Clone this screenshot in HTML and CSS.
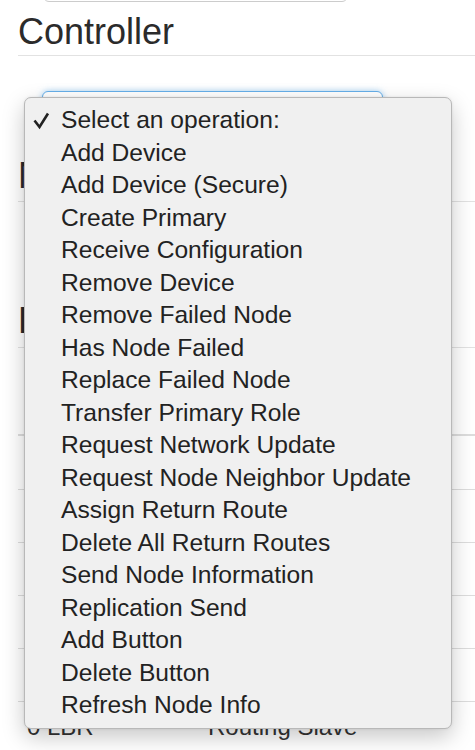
FILE: index.html
```html
<!DOCTYPE html>
<html>
<head>
<meta charset="utf-8">
<link rel="stylesheet" href="styles.css">
</head>
<body>
<div class="page">
  <div class="top-field"></div>
  <h3 class="heading heading-first">Controller</h3>
  <div class="select-box"></div>
  <h3 class="heading heading-second">Network</h3>
  <h3 class="heading heading-third">Devices</h3>
  <table class="nodes">
    <thead>
      <tr><th class="col-id">ID</th><th>Type</th></tr>
    </thead>
    <tbody>
      <tr><td>1 Controller</td><td>Static Controller</td></tr>
      <tr><td>2 Switch</td><td>Routing Slave</td></tr>
      <tr><td>3 Dimmer</td><td>Routing Slave</td></tr>
      <tr><td>4 Sensor</td><td>Routing Slave</td></tr>
      <tr><td>5 Sensor</td><td>Routing Slave</td></tr>
      <tr><td>0 LBR</td><td>Routing Slave</td></tr>
    </tbody>
  </table>

  <ul class="menu">
    <li class="item"><span class="gutter"><svg width="36" height="32" viewBox="0 0 36 32"><polyline points="9.5,16.5 14.5,23 23,9.5" fill="none" stroke="#222" stroke-width="2.6" stroke-linejoin="miter"/></svg></span><span>Select an operation:</span></li>
    <li class="item"><span class="gutter"></span><span>Add Device</span></li>
    <li class="item"><span class="gutter"></span><span>Add Device (Secure)</span></li>
    <li class="item"><span class="gutter"></span><span>Create Primary</span></li>
    <li class="item"><span class="gutter"></span><span>Receive Configuration</span></li>
    <li class="item"><span class="gutter"></span><span>Remove Device</span></li>
    <li class="item"><span class="gutter"></span><span>Remove Failed Node</span></li>
    <li class="item"><span class="gutter"></span><span>Has Node Failed</span></li>
    <li class="item"><span class="gutter"></span><span>Replace Failed Node</span></li>
    <li class="item"><span class="gutter"></span><span>Transfer Primary Role</span></li>
    <li class="item"><span class="gutter"></span><span>Request Network Update</span></li>
    <li class="item"><span class="gutter"></span><span>Request Node Neighbor Update</span></li>
    <li class="item"><span class="gutter"></span><span>Assign Return Route</span></li>
    <li class="item"><span class="gutter"></span><span>Delete All Return Routes</span></li>
    <li class="item"><span class="gutter"></span><span>Send Node Information</span></li>
    <li class="item"><span class="gutter"></span><span>Replication Send</span></li>
    <li class="item"><span class="gutter"></span><span>Add Button</span></li>
    <li class="item"><span class="gutter"></span><span>Delete Button</span></li>
    <li class="item"><span class="gutter"></span><span>Refresh Node Info</span></li>
  </ul>
</div>
</body>
</html>
```
FILE: styles.css
```css
html, body {
  margin: 0;
  padding: 0;
  background: #fff;
}
body {
  font-family: "Liberation Sans", Arial, sans-serif;
  color: #333;
  overflow: hidden;
}
.page {
  position: relative;
  padding-left: 18px;
  height: 750px;
  overflow: hidden;
}
.top-field {
  box-sizing: border-box;
  height: 40px;
  margin-top: -38px;
  margin-left: 25px;
  width: 305px;
  border: 1px solid #ccc;
  border-radius: 6px;
  background: #fff;
}
.heading {
  margin: 0;
  font-size: 36px;
  line-height: 40px;
  font-weight: normal;
  color: #2b2b2b;
  border-bottom: 1px solid #e2e2e2;
  white-space: nowrap;
}
.heading-first {
  margin-top: 10px;
  padding-bottom: 3px;
}
.heading-second {
  margin-top: 31px;
  padding-bottom: 5px;
}
.heading-third {
  margin-top: 99px;
  padding-bottom: 6px;
}
.select-box {
  box-sizing: border-box;
  margin-top: 35px;
  margin-left: 24px;
  width: 341px;
  height: 34px;
  border: 1px solid #66afe9;
  border-radius: 6px;
  box-shadow: 0 0 6px rgba(102, 175, 233, 0.6);
  background: #fff;
}
.nodes {
  margin-top: 34px;
  width: 100%;
  border-collapse: separate;
  border-spacing: 0;
  font-size: 24px;
  color: #333;
}
.nodes th {
  text-align: left;
  font-weight: bold;
  padding: 9px;
  line-height: 34px;
  border-bottom: 2px solid #ddd;
}
.nodes .col-id {
  width: 163px;
}
.nodes td {
  padding: 8px 9px 10px;
  line-height: 34px;
  border-top: 1px solid #ddd;
  white-space: nowrap;
}
.nodes tbody tr:first-child td {
  border-top-color: transparent;
}
.menu {
  position: absolute;
  left: 24px;
  top: 97px;
  box-sizing: border-box;
  width: 428px;
  height: 632px;
  margin: 0;
  padding: 6px 0 0;
  list-style: none;
  background: #f0f0f0;
  border: 1px solid #b8b8b8;
  border-radius: 7px;
  box-shadow: 0 8px 22px rgba(0, 0, 0, 0.22), 0 0 3px rgba(0, 0, 0, 0.08);
  font-family: "Liberation Sans", Arial, sans-serif;
  font-size: 24.6px;
  color: #222;
}
.item {
  display: flex;
  align-items: center;
  height: 32.5px;
  line-height: 32.5px;
  white-space: nowrap;
}
.gutter {
  flex: 0 0 36px;
  width: 36px;
  height: 32px;
}
.gutter svg {
  display: block;
}
```
